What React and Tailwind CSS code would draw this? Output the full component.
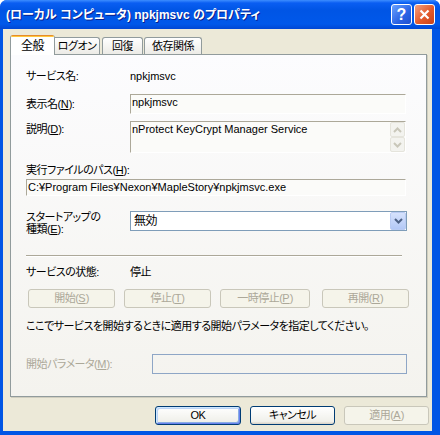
import React from 'react'

const font = "font-['Liberation_Sans','Noto_Sans_CJK_JP',sans-serif] [font-feature-settings:'palt']"
const jp = 'tracking-[-0.5px] whitespace-nowrap'

function K({ c }) {
  return <span className="underline underline-offset-[1px] tracking-normal">{c}</span>
}

function Chevron({ up, color, w = 2 }) {
  return (
    <svg width="9" height="6" viewBox="0 0 9 6">
      <path
        d={up ? 'M1 5 L4.5 1.5 L8 5' : 'M1 1 L4.5 4.5 L8 1'}
        fill="none"
        stroke={color}
        strokeWidth={w}
      />
    </svg>
  )
}

function DisabledBtn({ w, ml, children }) {
  return (
    <div
      className={`${w} ${ml} ${jp} h-[19px] flex items-center justify-center rounded-[3px] border border-[#c9c7ba] bg-[#f5f4ea] text-[#aca899]`}
    >
      {children}
    </div>
  )
}

export default function App() {
  return (
    <div className={`w-[440px] h-[435px] flex flex-col bg-[#0055e5] rounded-t-[7px] overflow-hidden text-[11px] text-black ${font}`}>
      {/* タイトルバー */}
      <div className="h-[29px] shrink-0 flex items-center pl-[6px] pr-[5px] bg-[linear-gradient(180deg,#3d8dff_0px,#0a5ef2_3px,#0055e5_10px,#0058ea_24px,#0047d4_29px)]">
        <span className="flex-1 text-white font-bold text-[12px] leading-none pt-[1px] whitespace-nowrap [text-shadow:1px_1px_0_#0a1e8c]">
          (ローカル コンピュータ) npkjmsvc のプロパティ
        </span>
        <div className="w-[21px] h-[21px] rounded-[3px] border border-white bg-[linear-gradient(135deg,#6aa2ff,#2a63e4_60%,#1d50d0)] flex items-center justify-center text-white font-bold text-[16px] leading-none font-['Liberation_Sans',sans-serif]">
          ?
        </div>
        <div className="w-[21px] h-[21px] ml-[2px] rounded-[3px] border border-white bg-[linear-gradient(135deg,#f4a080,#e35a2b_55%,#c9421a)] flex items-center justify-center">
          <svg width="11" height="11" viewBox="0 0 11 11">
            <path d="M1.5 1.5 L9.5 9.5 M9.5 1.5 L1.5 9.5" stroke="white" strokeWidth="2.2" />
          </svg>
        </div>
      </div>

      {/* 本体 */}
      <div className="flex-1 ml-[3px] mr-[8px] mb-[4px] bg-[#ece9d8] flex flex-col pt-[6px] pl-[7px] pr-[5px]">
        {/* タブ */}
        <div className={`h-[19px] flex items-end relative z-10 ${jp}`}>
          <div className="w-[45px] h-[20px] -mb-[1px] flex flex-col bg-white border-x border-[#919b9c] rounded-t-[3px] overflow-hidden text-[12px]">
            <div className="h-[3px] bg-[#ffc83c] border-t border-[#e68b2c]" />
            <div className="flex-1 flex items-center justify-center">全般</div>
          </div>
          <div className="w-[45px] h-[17px] flex items-center justify-center border border-b-0 border-[#919b9c] border-l-0 rounded-tr-[3px] bg-[linear-gradient(#ffffff,#ecebe6)]">
            ログオン
          </div>
          <div className="w-[41px] h-[17px] ml-[2px] flex items-center justify-center border border-b-0 border-[#919b9c] rounded-t-[3px] bg-[linear-gradient(#ffffff,#ecebe6)]">
            回復
          </div>
          <div className="w-[58px] h-[17px] ml-[1px] flex items-center justify-center border border-b-0 border-[#919b9c] rounded-t-[3px] bg-[linear-gradient(#ffffff,#ecebe6)]">
            依存関係
          </div>
        </div>

        {/* タブパネル */}
        <div className="h-[343px] border border-[#919b9c] shadow-[1px_1px_0_#d0cebf] bg-[linear-gradient(#fcfcfe,#f4f3ee)] flex flex-col pl-[15px]">
          <div className="mt-[13px] h-[16px] flex items-center">
            <span className={`w-[104px] ${jp}`}>サービス名:</span>
            <span>npkjmsvc</span>
          </div>

          <div className="mt-[10px] h-[20px] flex items-center">
            <span className={`w-[104px] ${jp}`}>表示名(<K c="N" />):</span>
            <div className="w-[276px] h-[20px] border border-t-[#aca899] border-l-[#aca899] border-b-white border-r-white bg-[#fbfbf9] pl-[1px] leading-[14px]">
              npkjmsvc
            </div>
          </div>

          <div className="mt-[7px] flex items-start">
            <span className={`w-[104px] leading-[16px] ${jp}`}>説明(<K c="D" />):</span>
            <div className="w-[276px] h-[32px] flex border border-t-[#aca899] border-l-[#aca899] border-b-white border-r-white bg-[#fbfbf9]">
              <div className="flex-1 pl-[1px] leading-[14px]">nProtect KeyCrypt Manager Service</div>
              <div className="w-[15px] flex flex-col">
                <div className="h-[15px] flex items-center justify-center rounded-[2px] border border-[#e5e4dc] bg-[#f3f3ef]">
                  <Chevron up color="#c9c7ba" />
                </div>
                <div className="h-[15px] flex items-center justify-center rounded-[2px] border border-[#e5e4dc] bg-[#f3f3ef]">
                  <Chevron color="#c9c7ba" />
                </div>
              </div>
            </div>
          </div>

          <div className={`mt-[9px] leading-[16px] ${jp}`}>実行ファイルのパス(<K c="H" />):</div>
          <div className="mt-[1px] w-[380px] h-[17px] border border-t-[#aca899] border-l-[#aca899] border-b-white border-r-white bg-[#fbfbf9] pl-[1px] leading-[15px]">
            C:¥Program Files¥Nexon¥MapleStory¥npkjmsvc.exe
          </div>

          <div className="mt-[15px] flex items-start">
            <div className={`w-[104px] leading-[12px] ${jp}`}>
              <div>スタートアップの</div>
              <div>種類(<K c="E" />):</div>
            </div>
            <div className="w-[277px] h-[20px] flex items-center border border-[#7f9db9] bg-white">
              <span className={`flex-1 pl-[3px] text-[12px] ${jp}`}>無効</span>
              <div className="w-[16px] h-[18px] flex items-center justify-center rounded-[2px] border border-[#b9cbf3] bg-[linear-gradient(#d6e2fc,#b3c8f6)]">
                <Chevron color="#4d6185" />
              </div>
            </div>
          </div>

          <div className="mt-[20px] w-[376px] border-t border-b border-t-[#aca899] border-b-white" />

          <div className="mt-[7px] h-[16px] flex items-center">
            <span className={`w-[104px] ${jp}`}>サービスの状態:</span>
            <span className={jp}>停止</span>
          </div>

          <div className="mt-[9px] flex">
            <DisabledBtn w="w-[87px]" ml="ml-[2px]">開始(<K c="S" />)</DisabledBtn>
            <DisabledBtn w="w-[87px]" ml="ml-[9px]">停止(<K c="T" />)</DisabledBtn>
            <DisabledBtn w="w-[90px]" ml="ml-[9px]">一時停止(<K c="P" />)</DisabledBtn>
            <DisabledBtn w="w-[87px]" ml="ml-[12px]">再開(<K c="R" />)</DisabledBtn>
          </div>

          <div className={`mt-[10px] h-[16px] leading-[16px] ${jp}`}>
            ここでサービスを開始するときに適用する開始パラメータを指定してください。
          </div>

          <div className="mt-[20px] h-[20px] flex items-center">
            <span className={`w-[126px] text-[#aca899] ${jp}`}>開始パラメータ(<K c="M" />):</span>
            <div className="w-[255px] h-[20px] border border-[#8ea6c6]" />
          </div>
        </div>

        {/* 下部ボタン */}
        <div className={`mt-[9px] -mr-[2px] flex justify-end gap-[9px] ${jp}`}>
          <div className="w-[86px] h-[19px] flex items-center justify-center rounded-[3px] border border-[#003c74] bg-[linear-gradient(#ffffff,#f0f0ea_85%,#dcd8cc)] shadow-[inset_1px_1px_0_#cee7ff,inset_-1px_-1px_0_#6982ee,inset_2px_2px_0_#bcd4f6,inset_-2px_-2px_0_#89ade4]">
            OK
          </div>
          <div className="w-[85px] h-[19px] flex items-center justify-center rounded-[3px] border border-[#003c74] bg-[linear-gradient(#ffffff,#f0f0ea_85%,#d6d0c5)]">
            キャンセル
          </div>
          <div className="w-[85px] h-[19px] flex items-center justify-center rounded-[3px] border border-[#c9c7ba] bg-[#f5f4ea] text-[#aca899]">
            適用(<K c="A" />)
          </div>
        </div>
      </div>
    </div>
  )
}
